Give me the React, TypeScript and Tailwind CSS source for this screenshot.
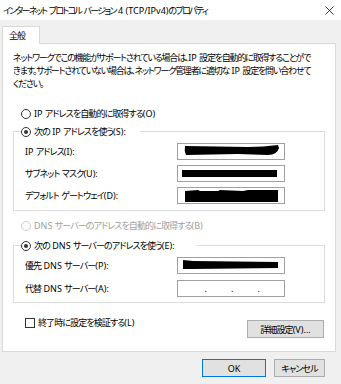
import { FC, ReactNode } from "react";

// keep latin runs at normal spacing, CJK runs get the tight spacing of the parent
const T: FC<{ children: string }> = ({ children }) => (
  <>
    {children.split(/([\x20-\x7e]+)/).map((part, i) =>
      /^[\x20-\x7e]+$/.test(part) ? (
        <span key={i} className="tracking-[0px]">
          {part}
        </span>
      ) : (
        <span key={i}>{part}</span>
      )
    )}
  </>
);

const Radio: FC<{ checked?: boolean; disabled?: boolean; children: string }> = ({
  checked,
  disabled,
  children,
}) => (
  <span className={`flex items-center h-[13px] whitespace-pre ${disabled ? "text-[#a0a0a0]" : "text-black"}`}>
    <span
      className={`w-[10px] h-[10px] rounded-full border bg-white flex items-center justify-center mr-[3px] ${
        disabled ? "border-[#cccccc]" : "border-[#333333]"
      }`}
    >
      {checked && <span className="w-[4px] h-[4px] rounded-full bg-[#333333]" />}
    </span>
    <span>
      <T>{children}</T>
    </span>
  </span>
);

const Field: FC<{ label: string; children?: ReactNode }> = ({ label, children }) => (
  <div className="flex items-center h-[17px]">
    <span className="w-[152px] whitespace-pre">
      <T>{label}</T>
    </span>
    <div className="w-[108px] h-[17px] border border-[#a0a0a0] bg-white relative overflow-hidden">
      {children}
    </div>
  </div>
);

const Blot: FC<{ d: string }> = ({ d }) => (
  <svg className="absolute inset-0" width="106" height="15" viewBox="0 0 106 15">
    <path d={d} fill="#000" />
  </svg>
);

export default function App() {
  return (
    <div className="w-[341px] h-[384px] bg-[#f0f0f0] overflow-hidden font-['Noto_Sans','Noto_Sans_CJK_JP',sans-serif] [font-feature-settings:'palt'] text-[9px] tracking-[-0.9px] leading-[13px] text-black">
      {/* title bar */}
      <div className="h-[20px] bg-white flex items-center justify-between pl-[3px] pr-[5px]">
        <span className="whitespace-pre tracking-[-1.7px]">
          <T>インターネット プロトコル バージョン 4 (TCP/IPv4)のプロパティ</T>
        </span>
        <svg width="9" height="9" viewBox="0 0 9 9" className="mr-[2px]">
          <path d="M0.5 0.5 L8.5 8.5 M8.5 0.5 L0.5 8.5" stroke="#222" strokeWidth="0.9" fill="none" />
        </svg>
      </div>

      {/* tab */}
      <div className="pt-[6px] pl-[2px]">
        <div className="relative z-10 -mb-px w-[38px] h-[18px] bg-white border border-b-0 border-[#d9d9d9] pl-[6px] pt-[2px]">
          全般
        </div>
        <div className="w-[334px] h-[309px] bg-white border border-[#d9d9d9] px-[10px] pt-[7px]">
          <p className="whitespace-pre tracking-[-1.2px]">
            <T>ネットワークでこの機能がサポートされている場合は、IP 設定を自動的に取得することがで</T>
            <br />
            <T>きます。サポートされていない場合は、ネットワーク管理者に適切な IP 設定を問い合わせて</T>
            <br />
            ください。
          </p>

          <div className="mt-[17px] pl-[8px] tracking-[-0.9px]">
            <Radio>IP アドレスを自動的に取得する(O)</Radio>
          </div>

          <fieldset className="mt-[5px] w-[312px] border border-[#dcdcdc] px-0 pb-[6px] tracking-[-0.9px]">
            <legend className="ml-[7px] pr-[14px]">
              <Radio checked>次の IP アドレスを使う(S):</Radio>
            </legend>
            <div className="flex flex-col gap-[5px] pl-[11px] pt-[5px]">
              <Field label="IP アドレス(I):">
                <Blot d="M7 2 L70 3 Q86 3 100 1 L101 4 Q99 11 90 11 L60 10 L8 11 Q6 7 7 2 Z" />
              </Field>
              <Field label="サブネット マスク(U):">
                <Blot d="M4 4 L99 4 L99 11 L4 11 Z" />
              </Field>
              <Field label="デフォルト ゲートウェイ(D):">
                <Blot d="M7 3 L20 2 L22 3 L40 3 L42 2 L65 3 L70 2 L100 2 L100 14 L7 14 Z" />
              </Field>
            </div>
          </fieldset>

          <div className="mt-[8px] pl-[8px] tracking-[-0.9px]">
            <Radio disabled>DNS サーバーのアドレスを自動的に取得する(B)</Radio>
          </div>

          <fieldset className="mt-[7px] w-[312px] border border-[#dcdcdc] px-0 pb-[5px] tracking-[-0.9px]">
            <legend className="ml-[7px] pr-[22px]">
              <Radio checked>次の DNS サーバーのアドレスを使う(E):</Radio>
            </legend>
            <div className="flex flex-col gap-[6px] pl-[11px] pt-[5px]">
              <Field label="優先 DNS サーバー(P):">
                <Blot d="M5 2 L15 3 L100 4 L100 10 L15 11 L5 11 Z" />
              </Field>
              <Field label="代替 DNS サーバー(A):">
                <div className="grid grid-cols-4 h-full items-center">
                  <span />
                  <span>.</span>
                  <span>.</span>
                  <span>.</span>
                </div>
              </Field>
            </div>
          </fieldset>

          <div className="mt-[14px] flex items-start justify-between pl-[12px] pr-[1px] w-[312px] tracking-[-0.9px]">
            <span className="flex items-center h-[11px] whitespace-pre">
              <span className="w-[10px] h-[10px] border border-[#333333] bg-white mr-[3px]" />
              <T>終了時に設定を検証する(L)</T>
            </span>
            <button className="mt-[3px] w-[77px] h-[18px] bg-[#e1e1e1] border border-[#adadad] flex items-center justify-center whitespace-pre">
              <T>詳細設定(V)...</T>
            </button>
          </div>
        </div>
      </div>

      {/* footer buttons */}
      <div className="mt-[7px] flex justify-end gap-[8px] pr-[16px] tracking-[-0.9px]">
        <button className="w-[64px] h-[18px] bg-[#e1e1e1] border border-[#0078d7] flex items-center justify-center">
          <span className="tracking-[0px]">OK</span>
        </button>
        <button className="w-[51px] h-[18px] bg-[#e1e1e1] border border-[#adadad] flex items-center justify-center">
          キャンセル
        </button>
      </div>
    </div>
  );
}
